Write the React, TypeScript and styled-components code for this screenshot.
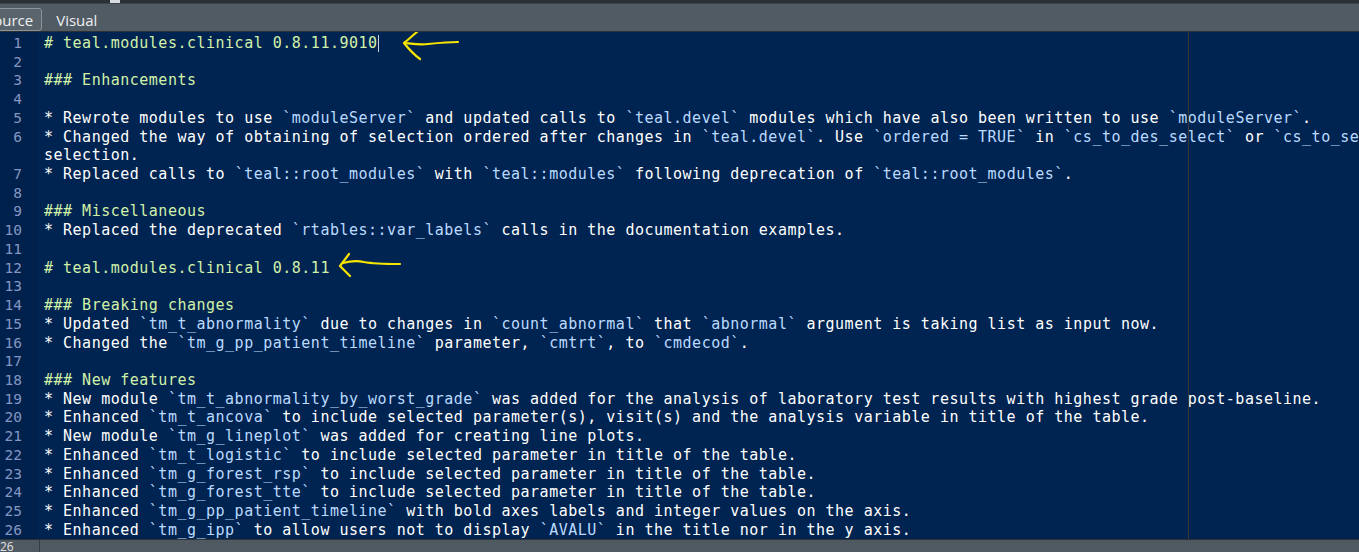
import React from 'react'
import styled, { createGlobalStyle } from 'styled-components'

const GlobalStyle = createGlobalStyle`
  html, body {
    margin: 0;
    padding: 0;
    background: #002451;
    overflow: hidden;
  }
`

const ROW_H = 18.72

type Line = { n: number; text: string; header?: boolean; cursor?: boolean; wrap?: string }

const lines: Line[] = [
  { n: 1, text: '# teal.modules.clinical 0.8.11.9010', header: true, cursor: true },
  { n: 2, text: '' },
  { n: 3, text: '### Enhancements', header: true },
  { n: 4, text: '' },
  {
    n: 5,
    text: '* Rewrote modules to use `moduleServer` and updated calls to `teal.devel` modules which have also been written to use `moduleServer`.'
  },
  {
    n: 6,
    text: '* Changed the way of obtaining of selection ordered after changes in `teal.devel`. Use `ordered = TRUE` in `cs_to_des_select` or `cs_to_select_filter` to keep',
    wrap: 'selection.'
  },
  {
    n: 7,
    text: '* Replaced calls to `teal::root_modules` with `teal::modules` following deprecation of `teal::root_modules`.'
  },
  { n: 8, text: '' },
  { n: 9, text: '### Miscellaneous', header: true },
  { n: 10, text: '* Replaced the deprecated `rtables::var_labels` calls in the documentation examples.' },
  { n: 11, text: '' },
  { n: 12, text: '# teal.modules.clinical 0.8.11', header: true },
  { n: 13, text: '' },
  { n: 14, text: '### Breaking changes', header: true },
  {
    n: 15,
    text: '* Updated `tm_t_abnormality` due to changes in `count_abnormal` that `abnormal` argument is taking list as input now.'
  },
  { n: 16, text: '* Changed the `tm_g_pp_patient_timeline` parameter, `cmtrt`, to `cmdecod`.' },
  { n: 17, text: '' },
  { n: 18, text: '### New features', header: true },
  {
    n: 19,
    text: '* New module `tm_t_abnormality_by_worst_grade` was added for the analysis of laboratory test results with highest grade post-baseline.'
  },
  {
    n: 20,
    text: '* Enhanced `tm_t_ancova` to include selected parameter(s), visit(s) and the analysis variable in title of the table.'
  },
  { n: 21, text: '* New module `tm_g_lineplot` was added for creating line plots.' },
  { n: 22, text: '* Enhanced `tm_t_logistic` to include selected parameter in title of the table.' },
  { n: 23, text: '* Enhanced `tm_g_forest_rsp` to include selected parameter in title of the table.' },
  { n: 24, text: '* Enhanced `tm_g_forest_tte` to include selected parameter in title of the table.' },
  {
    n: 25,
    text: '* Enhanced `tm_g_pp_patient_timeline` with bold axes labels and integer values on the axis.'
  },
  {
    n: 26,
    text: '* Enhanced `tm_g_ipp` to allow users not to display `AVALU` in the title nor in the y axis.'
  }
]

// split a markdown line into plain and `code` parts
const splitCode = (text: string) => {
  const parts: { code: boolean; value: string }[] = []
  const re = /`[^`]*`/g
  let last = 0
  let m: RegExpExecArray | null
  while ((m = re.exec(text)) !== null) {
    if (m.index > last) parts.push({ code: false, value: text.slice(last, m.index) })
    parts.push({ code: true, value: m[0] })
    last = m.index + m[0].length
  }
  if (last < text.length) parts.push({ code: false, value: text.slice(last) })
  return parts
}

const Arrow = ({ variant }: { variant: 1 | 2 }) =>
  variant === 1 ? (
    <ArrowSvg $x={398} $y={28} width={66} height={38} viewBox="0 0 66 38">
      <path d="M19 4 C14 8 10 12 6 15 C10 20 15 26 22 31" />
      <path d="M7 15 C16 16 22 17 30 16 C40 15 50 14 60 14" />
    </ArrowSvg>
  ) : (
    <ArrowSvg $x={334} $y={250} width={72} height={30} viewBox="0 0 72 30">
      <path d="M15 4 C12 8 9 12 6 16 C9 19 12 22 16 26" />
      <path d="M9 13 C16 11 22 10 30 12 C40 14 52 14 66 14" />
    </ArrowSvg>
  )

const App = () => {
  return (
    <>
      <GlobalStyle />
      <Frame>
        <TopStrip>
          <StripGrip />
        </TopStrip>
        <TabBar>
          <ModeTab $active>Source</ModeTab>
          <ModeTab>Visual</ModeTab>
        </TabBar>
        <Editor>
          <Gutter>
            {lines.map(line => (
              <React.Fragment key={line.n}>
                <LineNo>{line.n}</LineNo>
                {line.wrap !== undefined && <LineNo />}
              </React.Fragment>
            ))}
          </Gutter>
          <Code>
            {lines.map(line => (
              <React.Fragment key={line.n}>
                <Row $header={line.header}>
                  {splitCode(line.text).map((p, i) =>
                    p.code ? <CodeSpan key={i}>{p.value}</CodeSpan> : <span key={i}>{p.value}</span>
                  )}
                  {line.cursor && <Cursor />}
                </Row>
                {line.wrap !== undefined && <Row>{line.wrap}</Row>}
              </React.Fragment>
            ))}
            <MarginLine />
          </Code>
          <Arrow variant={1} />
          <Arrow variant={2} />
        </Editor>
        <StatusBar>
          <StatusPos>26</StatusPos>
        </StatusBar>
      </Frame>
    </>
  )
}

export default App

const Frame = styled.div`
  width: 1359px;
  height: 552px;
  display: flex;
  flex-direction: column;
  overflow: hidden;
`

const TopStrip = styled.div`
  height: 3px;
  background: #2c3136;
  display: flex;
  padding-left: 110px;
`

const StripGrip = styled.div`
  width: 10px;
  height: 3px;
  background: #d9dcdf;
`

const TabBar = styled.div`
  height: 29px;
  background: #515b64;
  border-top: 1px solid #3c434a;
  border-bottom: 1px solid #2b3035;
  display: flex;
  align-items: flex-start;
  padding-top: 4px;
  gap: 9px;
  box-sizing: border-box;
`

const ModeTab = styled.div<{ $active?: boolean }>`
  font-family: 'Open Sans', 'Liberation Sans', sans-serif;
  font-size: 15px;
  color: #eef0f2;
  height: 23px;
  box-sizing: border-box;
  display: flex;
  align-items: center;
  padding: 0 ${p => (p.$active ? '8px' : '4px')};
  margin-left: ${p => (p.$active ? '-24px' : '0')};
  border: 1px solid ${p => (p.$active ? '#8c949b' : 'transparent')};
  border-radius: 3px;
  background: ${p => (p.$active ? '#5a646d' : 'transparent')};
`

const Editor = styled.div`
  position: relative;
  height: 508px;
  display: flex;
  background: #002451;
  overflow: hidden;
`

const Gutter = styled.div`
  width: 38px;
  flex-shrink: 0;
  background: #00214b;
  padding-top: 2px;
  box-sizing: border-box;
`

const LineNo = styled.div`
  height: ${ROW_H}px;
  line-height: ${ROW_H}px;
  padding-right: 16px;
  text-align: right;
  font-family: 'DejaVu Sans Mono', monospace;
  font-size: 14.5px;
  color: #8496c4;
`

const Code = styled.div`
  position: relative;
  flex: 1;
  padding: 2px 0 0 6px;
  min-width: 0;
`

const Row = styled.div<{ $header?: boolean }>`
  height: ${ROW_H}px;
  line-height: ${ROW_H}px;
  white-space: pre;
  overflow: hidden;
  font-family: 'DejaVu Sans Mono', monospace;
  font-size: 15px;
  letter-spacing: 0.5px;
  color: ${p => (p.$header ? '#d1f1a9' : '#ffffff')};
`

const CodeSpan = styled.span`
  color: #bbdaff;
`

const Cursor = styled.span`
  display: inline-block;
  width: 1px;
  height: 17px;
  vertical-align: middle;
  background: #c8d0e0;
`

const MarginLine = styled.div`
  position: absolute;
  top: 0;
  bottom: 0;
  left: 1150px;
  width: 1px;
  background: #3a3a36;
`

const ArrowSvg = styled.svg<{ $x: number; $y: number }>`
  position: absolute;
  left: ${p => p.$x}px;
  top: ${p => p.$y - 32}px;
  fill: none;
  stroke: #f7e500;
  stroke-width: 2.2;
  stroke-linecap: round;
  stroke-linejoin: round;
`

const StatusBar = styled.div`
  flex: 1;
  background: #4f5962;
  border-top: 1px solid #2b3035;
  display: flex;
`

const StatusPos = styled.div`
  width: 40px;
  border-right: 1px solid #363c42;
  font-family: 'Open Sans', 'Liberation Sans', sans-serif;
  font-size: 12px;
  color: #e0e3e6;
  line-height: 10px;
  padding-top: 2px;
  box-sizing: border-box;
`
